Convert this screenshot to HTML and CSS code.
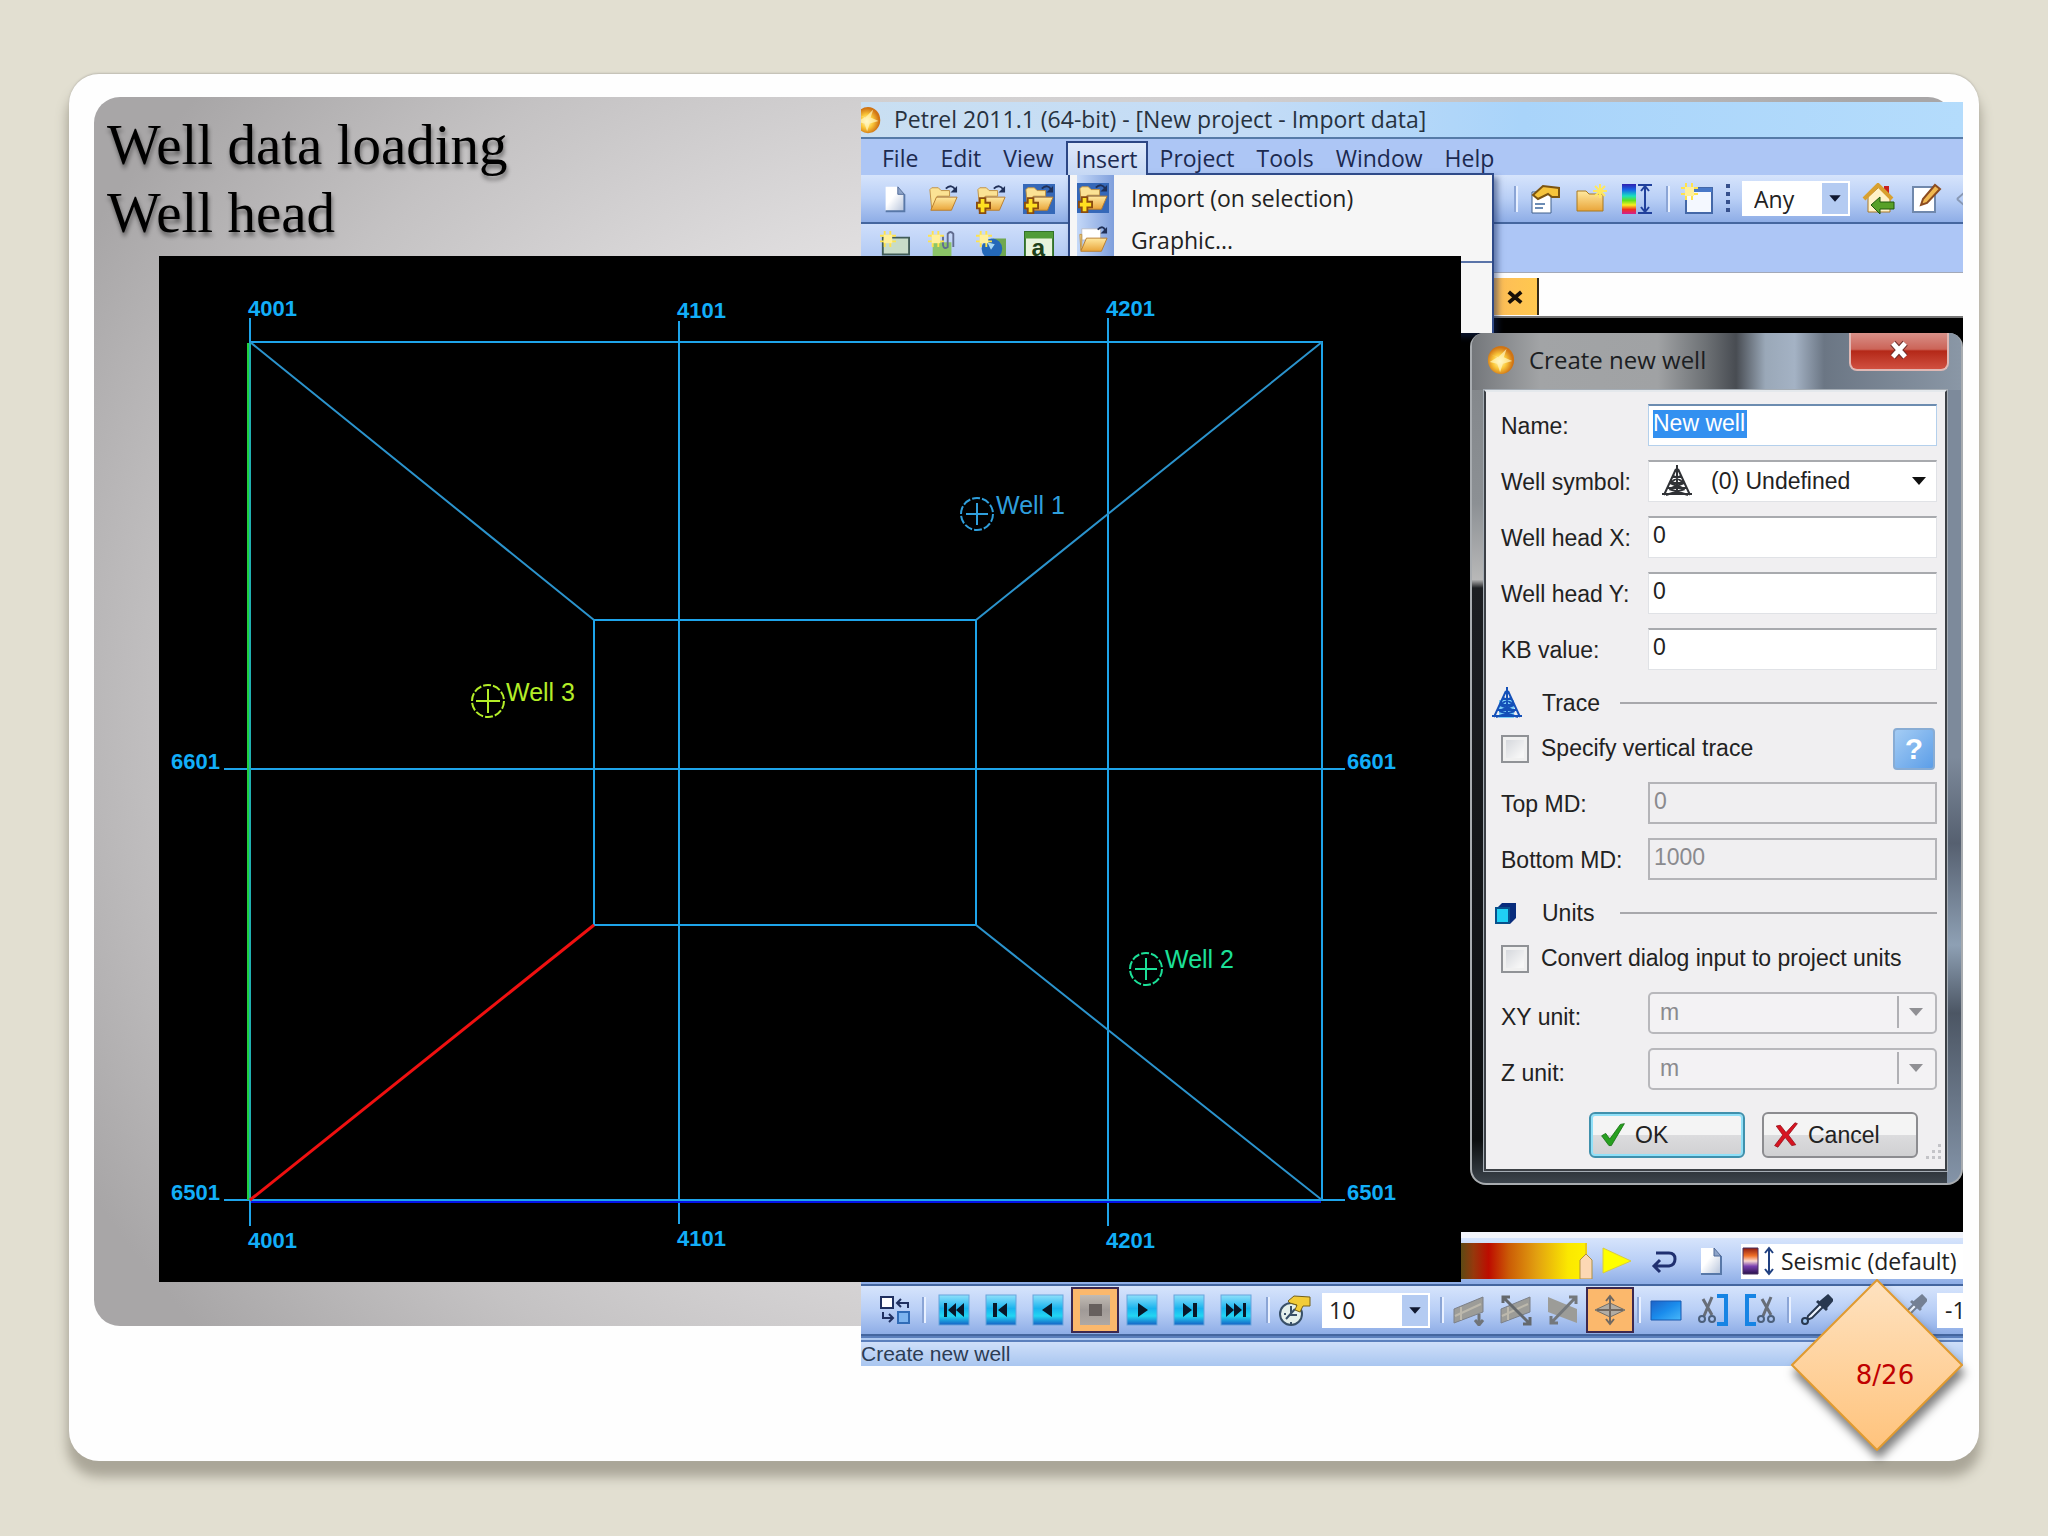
FILE: index.html
```html
<!DOCTYPE html>
<html lang="en">
<head>
<meta charset="utf-8">
<title>Well data loading</title>
<link rel="stylesheet" href="styles.css">
</head>
<body>
<svg class="sprite" aria-hidden="true">
  <defs>
    <linearGradient id="gFolder" x1="0" y1="0" x2="0" y2="1"><stop offset="0" stop-color="#ffe9a0"/><stop offset="1" stop-color="#e9a53a"/></linearGradient>
    <linearGradient id="gPage" x1="0" y1="0" x2="1" y2="1"><stop offset=".4" stop-color="#fff"/><stop offset="1" stop-color="#b4c2da"/></linearGradient>
    <linearGradient id="gPlay" x1="0" y1="0" x2="0" y2="1"><stop offset="0" stop-color="#8fe0fb"/><stop offset=".45" stop-color="#19b4ee"/><stop offset=".7" stop-color="#22d5f3"/><stop offset="1" stop-color="#1560c4"/></linearGradient>
    <linearGradient id="gStop" x1="0" y1="0" x2="0" y2="1"><stop offset="0" stop-color="#c2bbb3"/><stop offset=".5" stop-color="#a09a97"/><stop offset="1" stop-color="#b0a9a4"/></linearGradient>
    <linearGradient id="gRainbow" x1="0" y1="0" x2="0" y2="1"><stop offset="0" stop-color="#3020b0"/><stop offset=".2" stop-color="#1668e8"/><stop offset=".4" stop-color="#18e0c0"/><stop offset=".55" stop-color="#60e020"/><stop offset=".7" stop-color="#f8f020"/><stop offset=".85" stop-color="#f03020"/><stop offset="1" stop-color="#d02090"/></linearGradient>
    <linearGradient id="gRamp"><stop offset="0" stop-color="#5d4a14"/><stop offset=".1" stop-color="#96380c"/><stop offset=".22" stop-color="#bd0c00"/><stop offset=".38" stop-color="#cb5c06"/><stop offset=".6" stop-color="#e2a010"/><stop offset=".85" stop-color="#fbe800"/><stop offset="1" stop-color="#fff200"/></linearGradient>
    <linearGradient id="gSeis" x1="0" y1="0" x2="0" y2="1"><stop offset="0" stop-color="#8c1a10"/><stop offset=".3" stop-color="#f07028"/><stop offset=".5" stop-color="#f8d8d0"/><stop offset=".7" stop-color="#7a40b0"/><stop offset="1" stop-color="#28104c"/></linearGradient>
    <linearGradient id="gBlue" x1="0" y1="0" x2="1" y2="1"><stop offset="0" stop-color="#1c62c8"/><stop offset=".5" stop-color="#1a8cec"/><stop offset="1" stop-color="#48b8fa"/></linearGradient>
    <linearGradient id="gDiamond" x1="0" y1="0" x2="0" y2="1"><stop offset="0" stop-color="#fee2c0"/><stop offset="1" stop-color="#ffc37c"/></linearGradient>
    <radialGradient id="gOrb" cx=".45" cy=".55"><stop offset="0" stop-color="#fffbd8"/><stop offset=".5" stop-color="#fccb3c"/><stop offset="1" stop-color="#d07414"/></radialGradient>
  </defs>
  <symbol id="orb" viewBox="0 0 32 32"><ellipse cx="16" cy="16" rx="14" ry="15" fill="url(#gOrb)"/><path d="M5 10l8 3 9-9-3 9 9 4-10 3-3 9-3-9-8-2 8-5z" fill="#fff6c0" opacity=".7"/></symbol>
  <symbol id="page" viewBox="0 0 32 32"><path d="M6 3h13l7 7v19H6z" fill="url(#gPage)"/><path d="M26 11v18H6" fill="none" stroke="#5878a8" stroke-width="2"/><path d="M19 3l7 8h-7z" fill="#8ea4c8" stroke="#4c6898"/></symbol>
  <symbol id="folder" viewBox="0 0 32 32"><path d="M2 6l2-2h7l3 3h9v6H10L4 27z" fill="#fbe294" stroke="#c09040"/><path d="M9 14h22l-6 14H3z" fill="url(#gFolder)" stroke="#b87c2c"/><path d="M19 5c4-4 8-3 10 1" fill="none" stroke="#203058" stroke-width="2"/><path d="M31 2v7h-7z" fill="#203058"/></symbol>
  <symbol id="folderPage" viewBox="0 0 32 32"><path d="M4 4h20v12H4z" fill="#fff" stroke="#b8bcc8"/><path d="M2 10l2 0v14l-1 3z" fill="#fbe294" stroke="#c09040"/><path d="M9 14h22l-6 14H3z" fill="url(#gFolder)" stroke="#b87c2c"/><path d="M21 5c4-4 7-3 8 1" fill="none" stroke="#203058" stroke-width="2"/><path d="M31 2v7h-7z" fill="#203058"/></symbol>
  <symbol id="plus" viewBox="0 0 32 32"><path d="M4 15h6v5h5v6h-5v5H4v-5H1v-6h3z" fill="#ffe020" stroke="#8a4c10" stroke-width="2"/></symbol>
  <symbol id="star" viewBox="0 0 32 32"><path d="M5 0v17M11 0v17M0 5h17M0 11h17" stroke="#ffe34c" stroke-width="2"/><path d="M4 4h9v9H4z" fill="#fff09c"/></symbol>
  <symbol id="caret" viewBox="0 0 32 32"><path d="M9 12h14l-7 8z" fill="currentColor"/></symbol>
  <symbol id="derrick" viewBox="0 0 32 32"><path d="M16 0v6M15 4L3 30M17 4l12 26M12 12h8M9 18h14M7 23h18M1 29h30M13 11l10 7M19 11L9 18M9 18l15 6M23 18L8 24M8 24l19 6M24 24L5 30M16 5v25" fill="none" stroke="currentColor" stroke-width="2"/></symbol>
  <symbol id="slab" viewBox="0 0 32 32"><path d="M1 15L30 3v15L1 29z" fill="#9c9c98" stroke="#7c8088"/><path d="M2 22l26-12M8 13v13" stroke="#bcb8ac" stroke-width="2"/></symbol>
  <symbol id="scissors" viewBox="0 0 32 32"><path d="M6 5l9 16M15 3L7 22" stroke="#686e78" stroke-width="3"/><circle cx="5" cy="25" r="3" fill="none" stroke="#4c607c" stroke-width="2"/><circle cx="15" cy="25" r="3" fill="none" stroke="#4c607c" stroke-width="2"/></symbol>
  <symbol id="dropper" viewBox="0 0 32 32"><path d="M21 9L8 22l-1 4 5-2 12-12" fill="#eef4ff" stroke="currentColor" stroke-width="2"/><path d="M17 7l10 9M21 8l7-6 4 4-6 7z" fill="currentColor" stroke="currentColor" stroke-width="3"/><circle cx="5" cy="27" r="3" fill="#9cc4f0" stroke="currentColor" stroke-width="2"/></symbol>
  <symbol id="tile" viewBox="0 0 32 32"><rect x="1" y="1" width="30" height="30" fill="url(#gPlay)" stroke="#68a4dc"/></symbol>
</svg>

<main class="slide">
  <div class="panel"></div>
  <h1 class="slide-title">Well data loading<br>Well head</h1>

  <section class="petrel" aria-label="Petrel">
    <header class="titlebar"><svg class="orb"><use href="#orb"/></svg><span>Petrel 2011.1 (64-bit) - [New project - Import data]</span></header>
    <nav class="menubar">
      <button>File</button><button>Edit</button><button>View</button><button class="open">Insert</button><button>Project</button><button>Tools</button><button>Window</button><button>Help</button>
    </nav>
    <div class="toolbar">
      <div class="icons">
        <svg><use href="#page"/></svg>
        <svg><use href="#folder"/></svg>
        <svg><use href="#folder"/><use href="#plus"/></svg>
        <svg class="dark"><use href="#folder"/><use href="#plus"/></svg>
      </div>
      <div class="tools">
        <i class="sep"></i>
        <svg viewBox="0 0 32 32"><path d="M3 9h19v21H3z" fill="#fff" stroke="#40608c"/><path d="M6 21h10M6 25h8" stroke="#6c8cb4" stroke-width="2"/><path d="M4 12L14 3l16 2v9h-7l-4-3-10 5z" fill="#f6c43c" stroke="#7c5410" stroke-width="2"/></svg>
        <svg viewBox="0 0 32 32"><path d="M2 8h9l3 3h14v17H2z" fill="url(#gFolder)" stroke="#a87820"/><path d="M25 1v14M18 8h14M20 3l10 10M30 3L20 13" stroke="#ffe860" stroke-width="2"/></svg>
        <svg viewBox="0 0 32 32"><path d="M1 1h14v30H1z" fill="url(#gRainbow)"/><path d="M17 2h14M17 30h14M24 3v26M20 8l4-5 4 5M20 24l4 5 4-5" fill="none" stroke="#20409c" stroke-width="2"/></svg>
        <i class="sep"></i>
        <svg viewBox="0 0 32 32"><path d="M5 5h26v25H5z" fill="#f4f8ff" stroke="#4468a8" stroke-width="2"/><path d="M5 5h26v4H5z" fill="#4878c8"/><use href="#star"/></svg>
        <i class="dots"></i>
        <label class="combo any"><select aria-label="Filter"><option>Any</option></select><svg class="drop"><use href="#caret"/></svg></label>
        <svg viewBox="0 0 32 32"><path d="M21 3h5v10h-5z" fill="#c82020"/><path d="M5 14L16 4l11 11v14H5z" fill="#fff2c8" stroke="#a87828"/><path d="M1 16L15 2l14 14" fill="none" stroke="#d8a030" stroke-width="4"/><path d="M8 22l9-8v5h14v7H17v5z" fill="#58a028" stroke="#20580c"/></svg>
        <svg viewBox="0 0 32 32"><path d="M4 4h22v25H4z" fill="#fff" stroke="#7088ac" stroke-width="2"/><path d="M12 22l2-6L26 2l5 4-13 14z" fill="#f0b850" stroke="#8c4c20" stroke-width="2"/></svg>
        <svg viewBox="0 0 32 32"><path d="M2 16l8-7M2 16l8 7" stroke="#8898b4" stroke-width="2"/></svg>
      </div>
    </div>
    <div class="toolbar-row">
      <div class="icons">
        <svg viewBox="0 0 32 32"><path d="M3 7h28v18H3z" fill="#c8dcc8" stroke="#405c58" stroke-width="2"/><use href="#star"/></svg>
        <svg viewBox="0 0 32 32"><path d="M5 12h20v20H5z" fill="#8cc468"/><path d="M16 5v10q1 5 5 2V3q3-4 6 0v14" fill="none" stroke="#606c90" stroke-width="2"/><use href="#star"/></svg>
        <svg viewBox="0 0 32 32"><path d="M18 8h14v24H10z" fill="#70a850"/><circle cx="17" cy="19" r="11" fill="#2468b8"/><path d="M12 12l8 2-4 6z" fill="#a8d8f4"/><use href="#star"/></svg>
        <svg viewBox="0 0 32 32"><path d="M1 1h30v31H1z" fill="#e8f4dc" stroke="#307028" stroke-width="2"/><path d="M1 1h30v7H1z" fill="#509c38"/><text x="8" y="27" class="letter">a</text></svg>
      </div>
    </div>
    <div class="tabs"><button class="tab-close" aria-label="Close tab"><svg viewBox="0 0 32 32"><path d="M6 8l20 17M26 8L6 25" stroke="#181008" stroke-width="6"/></svg></button></div>
    <div class="workspace"></div>
    <div class="toolbar color-bar">
      <div class="colors">
        <svg class="ramp" viewBox="0 0 126 36"><path d="M0 0h126v36H0z" fill="url(#gRamp)"/><path d="M119 36V17l6-6 6 6v19z" fill="#fcd8b4" stroke="#b09040"/><path d="M125 0v11" stroke="#d8a838"/></svg>
        <svg viewBox="0 0 32 32"><path d="M2 3l28 13L2 28z" fill="#ffff00" stroke="#d8cc40"/></svg>
        <svg viewBox="0 0 32 32"><path d="M8 8h13q6 0 6 6t-6 7H6M12 15l-6 6 6 6" fill="none" stroke="#203070" stroke-width="3"/></svg>
        <svg><use href="#page"/></svg>
        <label class="combo seismic"><svg viewBox="0 0 36 32"><path d="M1 3h15v26H1z" fill="url(#gSeis)" stroke="#483060"/><path d="M27 3v26M23 8l4-5 4 5M23 24l4 5 4-5" fill="none" stroke="#204080" stroke-width="2"/></svg><select aria-label="Color table"><option>Seismic (default)</option></select></label>
      </div>
    </div>
    <div class="toolbar player">
      <svg viewBox="0 0 32 32"><path d="M2 3h12v11H2z" fill="#fff" stroke="#203060" stroke-width="2"/><path d="M19 18h11v11H19z" fill="#7cb4f0" stroke="#306cb8" stroke-width="2"/><path d="M29 14V9H18M22 5l-4 4 4 4M4 18v6h10M10 20l4 4-4 4" fill="none" stroke="#203060" stroke-width="2"/></svg>
      <i class="sep"></i>
      <div class="group">
        <svg viewBox="0 0 32 32"><use href="#tile"/><path d="M6 9h3v14H6zM18 9v14l-8-7zM26 9v14l-8-7z" fill="#081828"/></svg>
        <svg viewBox="0 0 32 32"><use href="#tile"/><path d="M8 9h4v14H8zM22 9v14l-9-7z" fill="#081828"/></svg>
        <svg viewBox="0 0 32 32"><use href="#tile"/><path d="M20 9v14l-10-7z" fill="#081828"/></svg>
        <svg viewBox="0 0 32 32" class="on"><path d="M1 1h30v30H1z" fill="url(#gStop)"/><path d="M10 10h13v12H10z" fill="#67605e"/></svg>
        <svg viewBox="0 0 32 32"><use href="#tile"/><path d="M12 9v14l10-7z" fill="#081828"/></svg>
        <svg viewBox="0 0 32 32"><use href="#tile"/><path d="M20 9h4v14h-4zM10 9v14l9-7z" fill="#081828"/></svg>
        <svg viewBox="0 0 32 32"><use href="#tile"/><path d="M23 9h3v14h-3zM6 9v14l8-7zM14 9v14l8-7z" fill="#081828"/></svg>
      </div>
      <i class="sep"></i>
      <svg viewBox="0 0 32 32"><circle cx="12" cy="20" r="11" fill="#e4f0ec" stroke="#385068" stroke-width="2"/><path d="M12 12v9h6M5 20h2M12 28v2M7 25l9-10" fill="none" stroke="#385068" stroke-width="2"/><path d="M9 7l6-5 16 1v9h-7l-3 6-5-2 2-5-7-2z" fill="#f2cc38" stroke="#746018"/></svg>
      <label class="combo step"><select aria-label="Step"><option>10</option></select><svg class="drop"><use href="#caret"/></svg></label>
      <i class="sep"></i>
      <div class="group">
        <svg viewBox="0 0 32 32"><use href="#slab"/><path d="M26 20v10M22 26l4 5 4-5" fill="none" stroke="#707478" stroke-width="3"/></svg>
        <svg viewBox="0 0 32 32"><use href="#slab"/><path d="M3 3l27 27M3 9V3h7M30 23v7h-7" fill="none" stroke="#64686c" stroke-width="3"/></svg>
        <svg viewBox="0 0 32 32"><path d="M1 3l29 12v14L1 18z" fill="#9c9c98"/><path d="M29 3L4 29M22 3h7v7M4 22v7h7" fill="none" stroke="#74787c" stroke-width="3"/></svg>
        <svg viewBox="0 0 32 32" class="on"><path d="M1 16l15-7 15 7-15 7z" fill="#b0aca4" stroke="#747068"/><path d="M16 3v26M12 7l4-5 4 5M12 25l4 5 4-5M3 16h26" fill="none" stroke="#706860" stroke-width="2"/></svg>
      </div>
      <i class="sep"></i>
      <div class="group">
        <svg viewBox="0 0 32 32"><path d="M1 7h30v19H1z" fill="url(#gBlue)" stroke="#1858b0"/></svg>
        <svg viewBox="0 0 32 32"><use href="#scissors"/><path d="M20 2h9v28h-9" fill="none" stroke="#1684e4" stroke-width="4"/></svg>
        <svg viewBox="0 0 32 32"><use href="#scissors" x="12"/><path d="M12 2H3v28h9" fill="none" stroke="#1684e4" stroke-width="4"/></svg>
      </div>
      <i class="sep"></i>
      <div class="group">
        <svg class="ink"><use href="#dropper"/></svg>
        <svg class="ink"><use href="#dropper"/></svg>
        <svg class="muted"><use href="#dropper"/></svg>
      </div>
      <span class="value">-1</span>
    </div>
    <footer class="status">Create new well</footer>

    <div class="popup">
      <div class="popup-item"><svg class="dark"><use href="#folder"/><use href="#plus"/></svg><span>Import (on selection)</span></div>
      <div class="popup-item"><svg><use href="#folderPage"/></svg><span>Graphic...</span></div>
      <hr>
    </div>
  </section>

  <figure class="survey">
    <svg viewBox="0 0 1302 1026" role="img" aria-label="Survey map with three wells">
      <g fill="none" stroke="#1ea4ea" stroke-width="2" shape-rendering="crispEdges">
        <path d="M91 62V970M520 65V968M949 62V970M65 513H1186M65 944H1186M91 86H1163V944M435 364H817V669H435z"/>
      </g>
      <g fill="none" stroke="#2b93cc" stroke-width="2">
        <path d="M91 86L435 364M1163 86L817 364M1163 944L817 669"/>
      </g>
      <path d="M89 87V944" stroke="#20d040" stroke-width="2"/>
      <path d="M91 87V944" stroke="#20b0b0" stroke-width="2"/>
      <path d="M92 946H1162" stroke="#0414e8" stroke-width="2"/>
      <path d="M91 944L435 669" stroke="#f01010" stroke-width="3"/>
      <g class="grid-label">
        <text x="89" y="60">4001</text><text x="518" y="62">4101</text><text x="947" y="60">4201</text>
        <text x="89" y="992">4001</text><text x="518" y="990">4101</text><text x="947" y="992">4201</text>
        <text x="12" y="513">6601</text><text x="1188" y="513">6601</text>
        <text x="12" y="944">6501</text><text x="1188" y="944">6501</text>
      </g>
      <g class="well w1"><circle cx="818" cy="258" r="16"/><path d="M807 258h22M818 247v22"/><text x="837" y="258">Well 1</text></g>
      <g class="well w3"><circle cx="329" cy="445" r="16"/><path d="M317 445h24M329 433v24"/><text x="347" y="445">Well 3</text></g>
      <g class="well w2"><circle cx="987" cy="713" r="16"/><path d="M976 713h22M987 702v22"/><text x="1006" y="712">Well 2</text></g>
    </svg>
  </figure>

  <section class="dialog" aria-label="Create new well">
    <header class="dialog-title"><svg><use href="#orb"/></svg><span>Create new well</span><button class="close" aria-label="Close"><svg viewBox="0 0 32 32"><path d="M7 6l18 20M25 6L7 26" stroke="#70302c" stroke-width="10"/><path d="M7 6l18 20M25 6L7 26" stroke="#fff" stroke-width="7"/></svg></button></header>
    <form class="well-form">
      <div class="fields">
        <label for="name">Name:</label><input id="name" class="picked" value="New well">
        <label for="symbol">Well symbol:</label>
        <div class="pick symbol"><select id="symbol"><option>(0) Undefined</option></select><svg class="lead"><use href="#derrick"/></svg><svg class="arrow"><use href="#caret"/></svg></div>
        <label for="hx">Well head X:</label><input id="hx" value="0">
        <label for="hy">Well head Y:</label><input id="hy" value="0">
        <label for="kb">KB value:</label><input id="kb" value="0">
      </div>
      <h2><svg class="blue"><use href="#derrick"/></svg><span>Trace</span><i></i></h2>
      <div class="check"><input type="checkbox" id="vt"><label for="vt">Specify vertical trace</label><button type="button" class="help">?</button></div>
      <div class="fields">
        <label for="top">Top MD:</label><input id="top" value="0" disabled>
        <label for="bot">Bottom MD:</label><input id="bot" value="1000" disabled>
      </div>
      <h2><svg viewBox="0 0 32 32"><path d="M5 12l6-6h14v15l-6 6z" fill="#082c7c"/><path d="M5 11h13v15H5z" fill="#20d0f4" stroke="#08508c" stroke-width="2"/></svg><span>Units</span><i></i></h2>
      <div class="check"><input type="checkbox" id="cv"><label for="cv">Convert dialog input to project units</label></div>
      <div class="fields units">
        <label for="xy">XY unit:</label><div class="pick unit"><select id="xy" disabled><option>m</option></select><svg class="arrow"><use href="#caret"/></svg></div>
        <label for="z">Z unit:</label><div class="pick unit"><select id="z" disabled><option>m</option></select><svg class="arrow"><use href="#caret"/></svg></div>
      </div>
      <div class="actions">
        <button type="button" class="ok"><svg viewBox="0 0 32 32"><path d="M2 17l5-3 5 7L25 3l5-1L14 29h-3z" fill="#28a020" stroke="#147010"/></svg>OK</button>
        <button type="button"><svg viewBox="0 0 32 32"><path d="M4 5l5-1 7 9L27 1l3 1-11 14 9 12-5 1-8-10L6 31l-4-2 10-13z" fill="#d81420" stroke="#98101c"/></svg>Cancel</button>
        <svg class="grip" viewBox="0 0 18 18"><path d="M13 1h3v3h-3zM13 7h3v3h-3zM13 13h3v3h-3zM7 7h3v3H7zM7 13h3v3H7zM1 13h3v3H1z" fill="#c4c4c8"/></svg>
      </div>
    </form>
  </section>

  <div class="page-mark">
    <svg viewBox="0 0 172 172"><path d="M86 1l85 85-85 85L1 86z" fill="url(#gDiamond)" stroke="#e09a30" stroke-width="2"/></svg>
    <span>8/26</span>
  </div>
</main>
</body>
</html>
```
FILE: styles.css
```css
* { box-sizing: border-box; }

body {
  margin: 0;
  min-height: 100vh;
  display: flex;
  padding: 74px 69px 75px;
  background: #e2dfd1;
  font-family: "Liberation Sans", Arial, sans-serif;
  font-size: 23px;
  color: #222;
}

.sprite { position: absolute; width: 0; height: 0; }
button, input, select { font: inherit; color: inherit; margin: 0; }
select { appearance: none; border: 0; background: none; padding: 0; opacity: 1; }
svg { display: block; flex: none; }

.slide {
  position: relative;
  flex: 1;
  min-height: 1387px;
  padding: 23px 25px 135px;
  display: grid;
  background: #fefefe;
  border-radius: 30px;
  box-shadow: 0 -1px 2px #bdbab0, 0 14px 12px 2px #aaa698;
}

.panel, .slide-title { grid-area: 1 / 1; }
.panel {
  border-radius: 26px;
  background: radial-gradient(ellipse 58% 78% at 50% 50%, #efedee 0%, #e6e4e5 45%, #c4c2c3 78%, #a8a6a7 100%);
}
.slide-title {
  margin: 0;
  padding: 14px 13px;
  font: 57px/68px "Liberation Serif", "Times New Roman", serif;
  color: #000;
  text-shadow: 1px 4px 4px rgba(0, 0, 0, .45);
}

/* Petrel window */
.petrel {
  position: absolute;
  top: 28px;
  right: 16px;
  left: 792px;
  height: 1264px;
  display: flex;
  flex-direction: column;
  overflow: hidden;
  font-family: "Open Sans", "Noto Sans", sans-serif;
  font-size: 23px;
}
.titlebar {
  height: 37px;
  display: flex;
  align-items: center;
  gap: 12px;
  background: linear-gradient(90deg, #c9dff2, #c4dcf6 35%, #a9d4fa 60%, #b4dcfc);
  border-bottom: 2px solid #567ba8;
}
.titlebar span { color: #27323f; line-height: 34px; padding-bottom: 2px; }
.menubar {
  height: 36px;
  padding-left: 11px;
  display: flex;
  background: #adc6f5;
}
.menubar button {
  border: 2px solid transparent;
  background: none;
  padding: 2px 8px 0;
  margin-right: 2px;
  line-height: 28px;
  color: #1c2a50;
}
.menubar .open {
  z-index: 1;
  margin-top: 2px;
  background: linear-gradient(#dfe9fb, #c6d8f4);
  border-color: #2c4684;
  border-bottom: 0;
  padding-top: 0;
}
.toolbar {
  height: 49px;
  display: flex;
  align-items: center;
  background: linear-gradient(#d6e4fc, #b9cff6 50%, #8eade6);
  border-bottom: 2px solid #44669f;
}
.icons { display: flex; gap: 16px; padding-left: 18px; }
.petrel svg { width: 34px; height: 32px; }
.petrel .icons svg, .petrel .popup svg { width: 32px; height: 30px; }
.petrel .orb { width: 28px; height: 28px; margin-left: -7px; }
.dark { background: #3568b8; }
.tools, .colors {
  margin-left: auto;
  flex: 0 0 449px;
  display: flex;
  align-items: center;
  gap: 12px;
  overflow: hidden;
}
.sep { flex: none; width: 2px; height: 26px; background: #8ba5d6; box-shadow: 2px 0 #e8f0ff; }
.dots { flex: none; width: 4px; height: 30px; background: repeating-linear-gradient(#36508c 0 4px, transparent 4px 8px); }
.combo { flex: none; display: flex; align-items: center; height: 35px; background: #fff; }
.combo select { flex: 1; min-width: 0; height: 35px; }
.any { width: 108px; padding-left: 12px; }
.step { width: 108px; padding-left: 7px; }
.petrel .drop { width: 26px; height: 31px; margin-right: 2px; background: #b4cbf2; color: #101830; }
.toolbar-row { height: 49px; background: #adc6f6; border-bottom: 1px solid #a3a9b8; }
.toolbar-row .icons { width: 420px; height: 48px; padding-top: 7px; background: linear-gradient(#cfdffb, #a4bff0); }
.letter { font: bold 26px "Liberation Sans", sans-serif; fill: #204018; }
.tabs { height: 45px; padding: 5px 0 1px 632px; background: #fefefe; border-bottom: 2px solid #777; }
.tab-close {
  width: 46px;
  height: 37px;
  display: grid;
  place-items: center;
  padding: 0;
  border: 0;
  border-right: 2px solid #332a18;
  background: linear-gradient(90deg, #fdbc58, #ffc84f);
}
.petrel .tab-close svg { width: 22px; height: 20px; }
.workspace { flex: 1; background: #000; }
.color-bar { height: 54px; border-top: 6px solid #f2f4fa; }
.colors { flex-basis: 502px; gap: 13px; }
.petrel .ramp { width: 126px; height: 36px; overflow: visible; }
.seismic { flex: 1; padding-left: 1px; gap: 3px; }
.petrel .seismic svg { width: 36px; height: 32px; }
.player { padding-left: 17px; gap: 10px; height: 50px; overflow: hidden; }
.player > * { flex: none; }
.group { display: flex; gap: 13px; padding: 0 3px; }
.group ~ .group { padding: 0; }
.on { background: #fbb86c; box-shadow: 0 0 0 5px #fbb86c, 0 0 0 7px #3c2850; }
.ink { color: #283850; }
.muted { color: #748094; }
.value { width: 40px; height: 35px; line-height: 35px; background: #fff; padding-left: 8px; }
.status {
  height: 30px;
  border-top: 6px double #5b7fbc;
  background: linear-gradient(#cfdff9, #a9c6f0);
  font: 21px/24px "Liberation Sans", Arial, sans-serif;
  color: #2c3c54;
}

.popup {
  position: absolute;
  top: 71px;
  left: 207px;
  width: 426px;
  height: 160px;
  padding: 2px 0 0 7px;
  background: linear-gradient(90deg, #f6f6f6 7px, #c4d8f8 7px, #7f9fdc 44px, #f6f6f6 44px);
  border: 2px solid #2f4a88;
  border-bottom: 0;
  box-shadow: 4px 4px 6px rgba(20, 40, 90, .5);
}
.popup-item { height: 42px; display: flex; align-items: center; gap: 22px; color: #222; }
.popup hr { margin: 0; border: 0; border-top: 2px solid #5a74a8; }

/* Survey map */
.survey {
  position: absolute;
  top: 182px;
  left: 90px;
  right: 518px;
  margin: 0;
  background: #000;
}
.survey svg { width: 100%; height: auto; }
.grid-label { font: bold 22px "Liberation Sans", sans-serif; fill: #12aef8; }
.well { fill: none; stroke-width: 2; font-size: 25px; }
.well circle { stroke-dasharray: 8 2; }
.well text { stroke: none; }
.w1 { stroke: #2f9fdc; } .w1 text { fill: #2f9fdc; }
.w2 { stroke: #1ce098; } .w2 text { fill: #1ce098; }
.w3 { stroke: #b4ee28; } .w3 text { fill: #b4ee28; }

/* Create new well dialog */
.dialog {
  position: absolute;
  top: 259px;
  right: 16px;
  width: 493px;
  padding: 0 14px 12px 12px;
  border: 2px solid #a8acb0;
  border-top: 0;
  border-radius: 14px 14px 16px 16px;
  background:
    linear-gradient(#7d8a9b 50%, #566070 60%, #8ea0b4 72%, #4c5664 80%, #8494a8) no-repeat 100% 0 / 14px 100%,
    linear-gradient(#808488, #8c9094 20%, #b8b8b8 29%, #1c1e22 30%, #0c0e10 95%, #3c444c);
}
.dialog-title {
  height: 57px;
  margin: 0 -14px 0 -12px;
  padding-left: 14px;
  display: flex;
  align-items: flex-start;
  gap: 13px;
  font: 24px/54px "Open Sans", "Noto Sans", sans-serif;
  color: #1c1e22;
  border-radius: 12px 12px 0 0;
  background: linear-gradient(90deg, #74777b 0, #a2a4a6 14%, #a0a2a4 38%, #6c7074 48%, #484c52 54%, #9aa8b8 60%, #a4b2c4 66%, #6b7684 72%, #8a97a6);
}
.dialog-title > svg { width: 30px; height: 34px; margin-top: 10px; }
.close {
  width: 100px;
  height: 38px;
  margin-left: auto;
  margin-right: 12px;
  display: grid;
  place-items: center;
  padding: 0 0 2px;
  border: 2px solid #e0b8b4;
  border-top: 0;
  border-radius: 0 0 8px 8px;
  background: linear-gradient(#d89088, #cc6458 45%, #b42818 50%, #d05040);
}
.close svg { width: 24px; height: 22px; }
.well-form {
  padding: 12px 8px 8px 5px;
  background: #f0eff1;
  border: 2px solid #3c4046;
  border-top-color: #e4e8ec;
  outline: 1px solid #a4acb4;
}
.fields {
  display: grid;
  grid-template-columns: 147px 1fr;
  grid-auto-rows: 42px;
  row-gap: 14px;
  padding-left: 10px;
  align-items: center;
}
.fields label { padding-top: 3px; white-space: nowrap; }
.units label { padding-top: 8px; }
.fields > input, .pick {
  width: 100%;
  height: 42px;
  padding: 0 4px 4px;
  background: #fff;
  border: 1px solid #e0e2e6;
  border-top: 2px solid #a8aaae;
}
.fields > .picked {
  color: #fff;
  border-color: #b4d0ec;
  border-top-color: #6c8cb0;
  background: linear-gradient(#3390f0, #3390f0) no-repeat 4px 4px / 94px 28px #fff;
}
.fields > input:disabled { background: #f0eff1; color: #8a8a8e; border: 2px solid #b4b4b8; }
.pick { display: grid; align-items: center; }
.pick > * { grid-area: 1 / 1; }
.pick svg { pointer-events: none; }
.symbol { padding: 0 0 2px 12px; }
.symbol select { padding-left: 50px; }
.lead { width: 32px; height: 32px; color: #303236; }
.arrow { width: 34px; height: 32px; justify-self: end; color: #101010; }
.unit { background: #f3f2f4; border: 2px solid #b8b8bc; border-radius: 5px; padding: 0 2px 2px 10px; color: #8a8a8e; }
.unit .arrow { color: #909094; border-left: 2px solid #b0b0b4; width: 36px; }
.well-form h2 {
  height: 56px;
  margin: 0;
  padding: 10px 0 0;
  display: flex;
  align-items: center;
  font: inherit;
}
.well-form h2 svg { width: 32px; height: 34px; }
.well-form h2 span { width: 78px; margin-left: 19px; }
.well-form h2 i { flex: 1; height: 2px; background: #a8a8ac; }
.blue { color: #1450b8; background: linear-gradient(#7cd0f8, #7cd0f8) no-repeat 8px 14px / 15px 18px; }
.check { height: 42px; margin-bottom: 14px; padding: 3px 2px 0 10px; display: flex; align-items: center; white-space: nowrap; }
.check input {
  appearance: none;
  flex: none;
  width: 28px;
  height: 28px;
  margin-right: 12px;
  border: 2px solid #909296;
  background: linear-gradient(135deg, #cfd2d8, #f6f6f6 75%);
  box-shadow: inset 0 0 0 3px #f0f0f0;
}
.help {
  width: 42px;
  height: 42px;
  margin-left: auto;
  padding: 0;
  border: 2px solid #88acd4;
  border-radius: 4px;
  background: linear-gradient(135deg, #a4ccf4, #5c9ee8);
  color: #fff;
  font-size: 30px;
  font-weight: bold;
  line-height: 34px;
}
.actions { margin-top: 22px; padding-bottom: 3px; display: flex; justify-content: flex-end; gap: 17px; }
.actions button {
  width: 156px;
  height: 46px;
  padding: 0 9px;
  display: flex;
  align-items: center;
  gap: 9px;
  border: 2px solid #8c8c90;
  border-radius: 6px;
  background: linear-gradient(#f4f4f4 50%, #dcdcde 50%, #d0d0d2);
}
.actions .ok { border-color: #4090ac; box-shadow: inset 0 0 0 2px #90e0f8; }
.actions button svg { width: 26px; height: 26px; }
.actions .grip { width: 18px; height: 18px; align-self: flex-end; margin: 0 -6px -3px -10px; }

.page-mark {
  position: absolute;
  right: 16px;
  bottom: 10px;
  width: 172px;
  height: 172px;
  display: grid;
  place-items: center;
  font: 26px/30px "DejaVu Sans", Verdana, sans-serif;
  color: #c00000;
}
.page-mark > * { grid-area: 1 / 1; }
.page-mark svg { width: 172px; height: 172px; filter: drop-shadow(2px 8px 5px rgba(0, 0, 0, .5)); }
.page-mark span { z-index: 1; padding: 20px 0 0 16px; }
```
